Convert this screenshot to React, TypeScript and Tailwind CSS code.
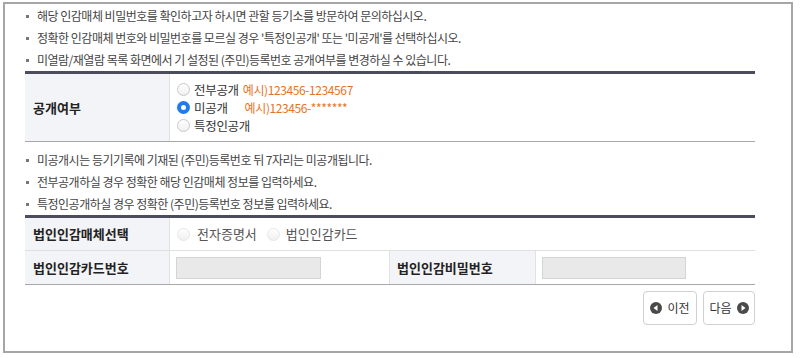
import { FC } from "react";

const font = { fontFamily: '"Noto Sans CJK KR", "Noto Sans", sans-serif' };

const Bullets: FC<{ items: string[]; className?: string }> = ({ items, className }) => (
  <ul className={`text-[12px] leading-[22px] text-[#444] tracking-[-0.5px] ${className ?? ""}`}>
    {items.map((t, i) => (
      <li key={i} className="flex items-center">
        <span className="w-[3px] h-[3px] bg-[#777] ml-[1px] mr-[8px]" />
        {t}
      </li>
    ))}
  </ul>
);

const Radio: FC<{ checked?: boolean; faint?: boolean }> = ({ checked, faint }) =>
  checked ? (
    <span className="w-[13px] h-[13px] rounded-full bg-[#1e7cf0] flex items-center justify-center shrink-0">
      <span className="w-[5px] h-[5px] rounded-full bg-white" />
    </span>
  ) : (
    <span
      className={`block w-[13px] h-[13px] rounded-full border shrink-0 bg-gradient-to-b from-white to-[#f0f0f0] ${
        faint ? "border-[#e6e6e6]" : "border-[#c8c8c8]"
      }`}
    />
  );

const NavIcon: FC<{ dir: "left" | "right" }> = ({ dir }) => (
  <svg width="12" height="12" viewBox="0 0 12 12">
    <circle cx="6" cy="6" r="6" fill="#4a4a4a" />
    {dir === "left" ? (
      <polygon points="7.5,3 3.5,6 7.5,9" fill="#fff" />
    ) : (
      <polygon points="4.5,3 8.5,6 4.5,9" fill="#fff" />
    )}
  </svg>
);

const App: FC = () => {
  return (
    <div className="w-[800px] h-[358px] bg-white pt-[2px] pl-[3px]" style={font}>
      <div className="w-[790px] h-[351px] border-2 border-[#a6a6a6] pl-[20px] pt-[1px]">
        <div className="w-[730px]">
          <Bullets
            items={[
              "해당 인감매체 비밀번호를 확인하고자 하시면 관할 등기소를 방문하여 문의하십시오.",
              "정확한 인감매체 번호와 비밀번호를 모르실 경우 '특정인공개' 또는 '미공개'를 선택하십시오.",
              "미열람/재열람 목록 화면에서 기 설정된 (주민)등록번호 공개여부를 변경하실 수 있습니다.",
            ]}
          />

          {/* 공개여부 */}
          <div className="border-t-[3px] border-[#4b4c5c] border-b border-b-[#a8a8a8] flex h-[71px]">
            <div className="w-[145px] bg-[#f3f4f7] border-r border-[#e2e2e2] flex items-center pl-[8px] text-[13px] font-bold text-[#222]">
              공개여부
            </div>
            <div className="flex flex-col justify-center pl-[7px] text-[12.5px] leading-[18px] text-[#333] tracking-[-0.3px]">
              <label className="flex items-center gap-[4px]">
                <Radio />
                <span>전부공개</span>
                <span className="text-[#e8731e] text-[12px] tracking-[-0.4px]">예시)123456-1234567</span>
              </label>
              <label className="flex items-center gap-[4px]">
                <Radio checked />
                <span>미공개</span>
                <span className="text-[#e8731e] text-[12px] tracking-[-0.4px] ml-[13px]">예시)123456-*******</span>
              </label>
              <label className="flex items-center gap-[4px]">
                <Radio />
                <span>특정인공개</span>
              </label>
            </div>
          </div>

          <Bullets
            className="pt-[7px]"
            items={[
              "미공개시는 등기기록에 기재된 (주민)등록번호 뒤 7자리는 미공개됩니다.",
              "전부공개하실 경우 정확한 해당 인감매체 정보를 입력하세요.",
              "특정인공개하실 경우 정확한 (주민)등록번호 정보를 입력하세요.",
            ]}
          />

          {/* 법인인감 */}
          <div className="border-t-[3px] border-[#4b4c5c] border-b border-b-[#a8a8a8] text-[13px]">
            <div className="flex h-[33px] border-b border-[#e0e0e0]">
              <div className="w-[145px] bg-[#f3f4f7] border-r border-[#e2e2e2] flex items-center pl-[8px] font-bold text-[#222]">
                법인인감매체선택
              </div>
              <div className="flex items-center pl-[7px] text-[#555]">
                <Radio faint />
                <span className="ml-[7px]">전자증명서</span>
                <span className="ml-[10px] flex">
                  <Radio faint />
                </span>
                <span className="ml-[6px]">법인인감카드</span>
              </div>
            </div>
            <div className="flex h-[33px]">
              <div className="w-[145px] bg-[#f3f4f7] border-r border-[#e2e2e2] flex items-center pl-[8px] font-bold text-[#222]">
                법인인감카드번호
              </div>
              <div className="w-[220px] border-r border-[#e2e2e2] flex items-center pl-[6px]">
                <div className="w-[145px] h-[22px] bg-[#e9e9e9] border border-[#d4d4d4]" />
              </div>
              <div className="w-[146px] bg-[#f3f4f7] border-r border-[#e2e2e2] flex items-center pl-[7px] font-bold text-[#222]">
                법인인감비밀번호
              </div>
              <div className="flex items-center pl-[6px]">
                <div className="w-[144px] h-[22px] bg-[#e9e9e9] border border-[#d4d4d4]" />
              </div>
            </div>
          </div>

          <div className="flex justify-end gap-[6px] mt-[6px]">
            <button className="w-[54px] h-[34px] border border-[#d0d0d0] rounded-[4px] bg-white flex items-center justify-center gap-[5px] text-[12px] text-[#333]">
              <NavIcon dir="left" />
              이전
            </button>
            <button className="w-[52px] h-[34px] border border-[#d0d0d0] rounded-[4px] bg-white flex items-center justify-center gap-[5px] text-[12px] text-[#333]">
              다음
              <NavIcon dir="right" />
            </button>
          </div>
        </div>
      </div>
    </div>
  );
};

export default App;
